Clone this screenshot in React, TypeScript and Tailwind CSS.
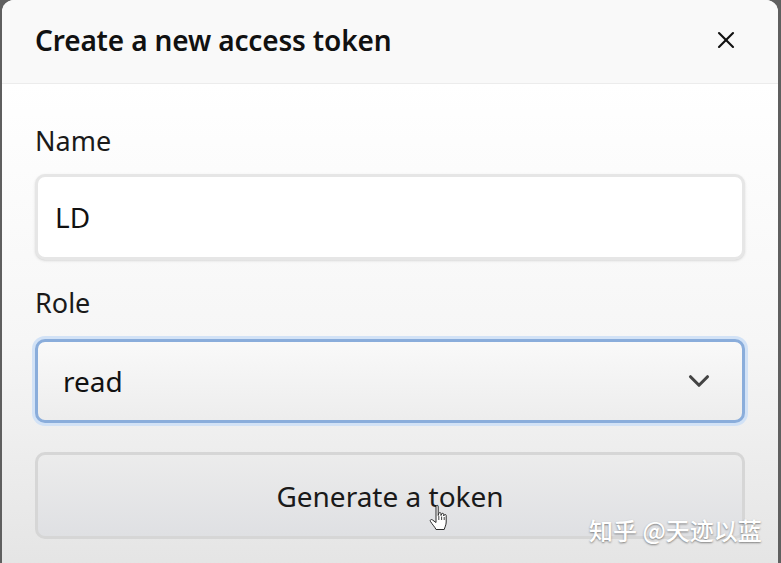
import { X, ChevronDown } from 'lucide-react';

const font = { fontFamily: '"Noto Sans", "Noto Sans CJK SC", sans-serif' };

function HandCursor() {
  return (
    <svg width="26" height="30" viewBox="0 0 26 30" className="absolute left-[428px] top-[504px]">
      <path
        d="M8 2.5c0-1.2 2.2-1.2 2.2 0v9l.6-2.2c.4-1 2-1 2.2.2v2l.6-1.5c.4-1 2-.9 2.1.3v1.6l.6-1c.5-.8 1.9-.5 1.9.6v6.5c0 3-1.5 5.5-2 7.5h-8.2c-.7-2-3.7-5-5.6-8.2-.7-1.2.8-2.4 2-1.4L8 18.5z"
        fill="#fff"
        stroke="#2b2b2b"
        strokeWidth="1"
        strokeLinejoin="round"
      />
      <path d="M10.8 12v4M13.6 12.5v3.5M16.2 13v3" stroke="#2b2b2b" strokeWidth="0.9" />
    </svg>
  );
}

export default function App() {
  return (
    <div className="relative h-[563px] w-[781px] overflow-hidden bg-[#5f5f5f]" style={font}>
      <div className="ml-[2px] mr-[3px] flex h-[600px] flex-col overflow-hidden rounded-t-[12px] bg-white">
        {/* header */}
        <div className="flex h-[84px] shrink-0 items-center justify-between border-b border-[#ececec] bg-[#f9f9f9] pb-[4px] pl-[33px] pr-[38px]">
          <h2 className="text-[28px] font-semibold tracking-[-0.15px] text-[#111]">Create a new access token</h2>
          <X className="h-[28px] w-[28px] text-[#111]" strokeWidth={1.8} />
        </div>

        {/* body */}
        <div className="flex flex-1 flex-col bg-gradient-to-b from-white via-[#f6f6f6] to-[#e2e2e2] px-[33px] pt-[41px]">
          <label className="text-[27px] leading-[32px] text-[#1a1a1a]">Name</label>
          <div className="mt-[17px] flex h-[86px] items-center rounded-[10px] border-[3px] border-[#e6e6e6] bg-white px-[17px] shadow-sm">
            <span className="text-[28px] text-[#111]">LD</span>
          </div>

          <label className="mt-[27px] text-[27px] leading-[32px] text-[#1a1a1a]">Role</label>
          <div className="-mx-[3px] mt-[17px] rounded-[13px] bg-[#d2e2f6] p-[3px]">
            <div className="flex h-[84px] items-center justify-between rounded-[10px] border-[3px] border-[#8aaddb] bg-gradient-to-b from-[#f9f9f9] to-[#ededed] pl-[25px] pr-[26px]">
              <span className="text-[28px] text-[#111]">read</span>
              <ChevronDown className="h-[34px] w-[34px] text-[#444]" strokeWidth={2.2} />
            </div>
          </div>

          <button className="mt-[26px] flex h-[87px] items-center justify-center rounded-[10px] border-[3px] border-[#d6d6d6] bg-gradient-to-b from-[#ececec] to-[#dfe0e3] text-[28px] text-[#1a1a1a]">
            Generate a token
          </button>
        </div>
      </div>

      <HandCursor />

      <div className="absolute left-[589px] top-[512px] text-[24px] font-medium text-white [text-shadow:0_1px_2px_rgba(0,0,0,0.45)]" style={{ fontFamily: '"Noto Sans CJK SC", "Noto Sans", sans-serif' }}>
        知乎 @天迹以蓝
      </div>
    </div>
  );
}
